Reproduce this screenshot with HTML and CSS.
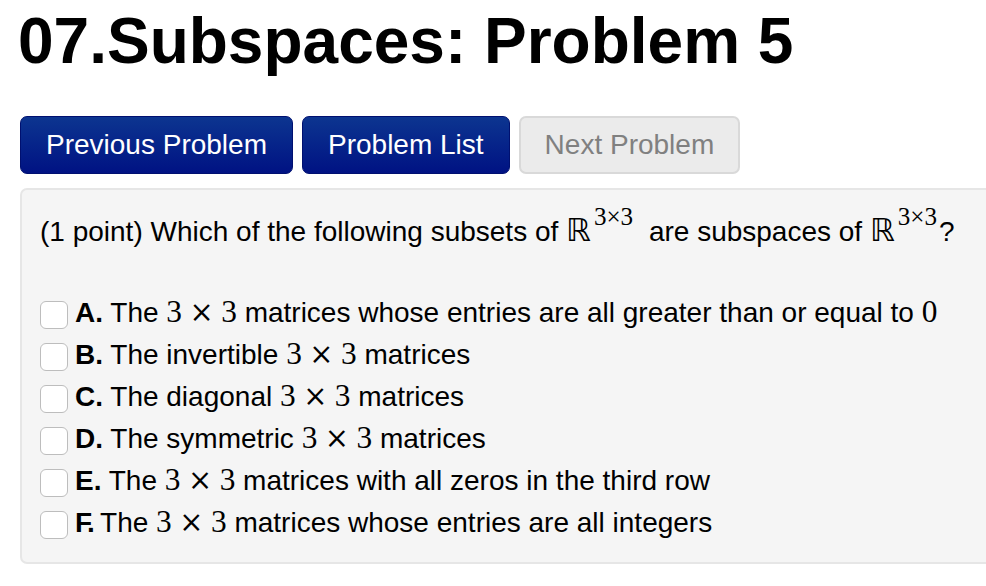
FILE: index.html
```html
<!DOCTYPE html>
<html lang="en">
  <head>
    <meta charset="UTF-8" />
    <meta name="viewport" content="width=device-width, initial-scale=1.0" />
    <title>07.Subspaces: Problem 5</title>
    <link rel="stylesheet" href="styles.css">
  </head>
  <body>
    <div class="wrapper">
      <h1 class="title">07.Subspaces: Problem 5</h1>

      <nav class="problem-nav">
        <a href="javascript:void(0)" class="btn btn-primary">Previous Problem</a>
        <a href="javascript:void(0)" class="btn btn-primary">Problem List</a>
        <a href="javascript:void(0)" class="btn btn-disabled">Next Problem</a>
      </nav>

      <div class="problem">
        <p class="question">
          (1 point) Which of the following subsets of
          <span class="math"><span class="bb">ℝ</span><sup class="sup">3×3</sup></span>
          are subspaces of
          <span class="math"><span class="bb">ℝ</span><sup class="sup sup-end">3×3</sup></span>?
        </p>

        <ul class="choices">
          <li>
            <label><input type="checkbox" /><b>A.</b> The <span class="math">3<span class="op">×</span>3</span> matrices whose entries are all greater than or equal to <span class="math">0</span></label>
          </li>
          <li>
            <label><input type="checkbox" /><b>B.</b> The invertible <span class="math">3<span class="op">×</span>3</span> matrices</label>
          </li>
          <li>
            <label><input type="checkbox" /><b>C.</b> The diagonal <span class="math">3<span class="op">×</span>3</span> matrices</label>
          </li>
          <li>
            <label><input type="checkbox" /><b>D.</b> The symmetric <span class="math">3<span class="op">×</span>3</span> matrices</label>
          </li>
          <li>
            <label><input type="checkbox" /><b>E.</b> The <span class="math">3<span class="op">×</span>3</span> matrices with all zeros in the third row</label>
          </li>
          <li>
            <label><input type="checkbox" /><b class="tight">F.</b> The <span class="math">3<span class="op">×</span>3</span> matrices whose entries are all integers</label>
          </li>
        </ul>
      </div>
    </div>
  </body>
</html>
```

FILE: styles.css
```css
body {
  margin: 0;
  background: #fff;
  color: #000;
  font-family: "Liberation Sans", Arial, sans-serif;
  overflow: hidden;
}
.wrapper {
  padding-left: 20px;
}
.title {
  margin: 9px 0 0 -2px;
  font-size: 64px;
  line-height: 64px;
  font-weight: bold;
}

/* navigation buttons */
.problem-nav {
  display: flex;
  gap: 9px;
  margin-top: 43px;
}
.btn {
  display: block;
  box-sizing: border-box;
  height: 58px;
  padding: 11px 25px;
  font-size: 28px;
  line-height: 34px;
  text-decoration: none;
  border-radius: 7px;
  border: 1px solid;
}
.btn-primary {
  color: #fff;
  background: linear-gradient(#0c3590, #001283);
  border-color: #001070;
}
.btn-disabled {
  color: #808080;
  background: #ebebeb;
  border: 2px solid #d9d9d9;
  padding: 10px 24px;
}

/* problem body */
.problem {
  box-sizing: border-box;
  width: 1000px;
  margin-top: 14px;
  padding: 19px 18px 19px;
  background: #f5f5f5;
  border: 2px solid #e6e6e6;
  border-radius: 7px;
  font-size: 28px;
}
.question {
  margin: 0 0 38px;
  line-height: 42px;
}
.math {
  font-family: "Liberation Serif", "Times New Roman", serif;
  font-size: 1.12em;
}
.math .op {
  margin: 0 0.26em;
  font-family: "DejaVu Serif", serif;
  font-size: 0.92em;
}
.bb {
  font-family: "DejaVu Sans", sans-serif;
  font-size: 1em;
}
.sup {
  font-size: 0.8em;
  vertical-align: 0.65em;
  line-height: 0;
  margin-left: 3px;
  margin-right: 8px;
}
.sup-end {
  margin-right: 2px;
}
.choices {
  list-style: none;
  margin: 0;
  padding: 0;
}
.choices li {
  line-height: 42px;
  height: 42px;
}
.choices label {
  display: flex;
  align-items: baseline;
  white-space: pre;
}
.choices input {
  appearance: none;
  -webkit-appearance: none;
  box-sizing: border-box;
  flex: none;
  width: 28px;
  height: 28px;
  margin: 0 7px 0 0;
  background: #fff;
  border: 1px solid #bdbdbd;
  border-radius: 6px;
  align-self: center;
  position: relative;
  top: 2px;
}
.choices b {
  font-weight: bold;
}
.choices b.tight {
  letter-spacing: -2px;
}
```
